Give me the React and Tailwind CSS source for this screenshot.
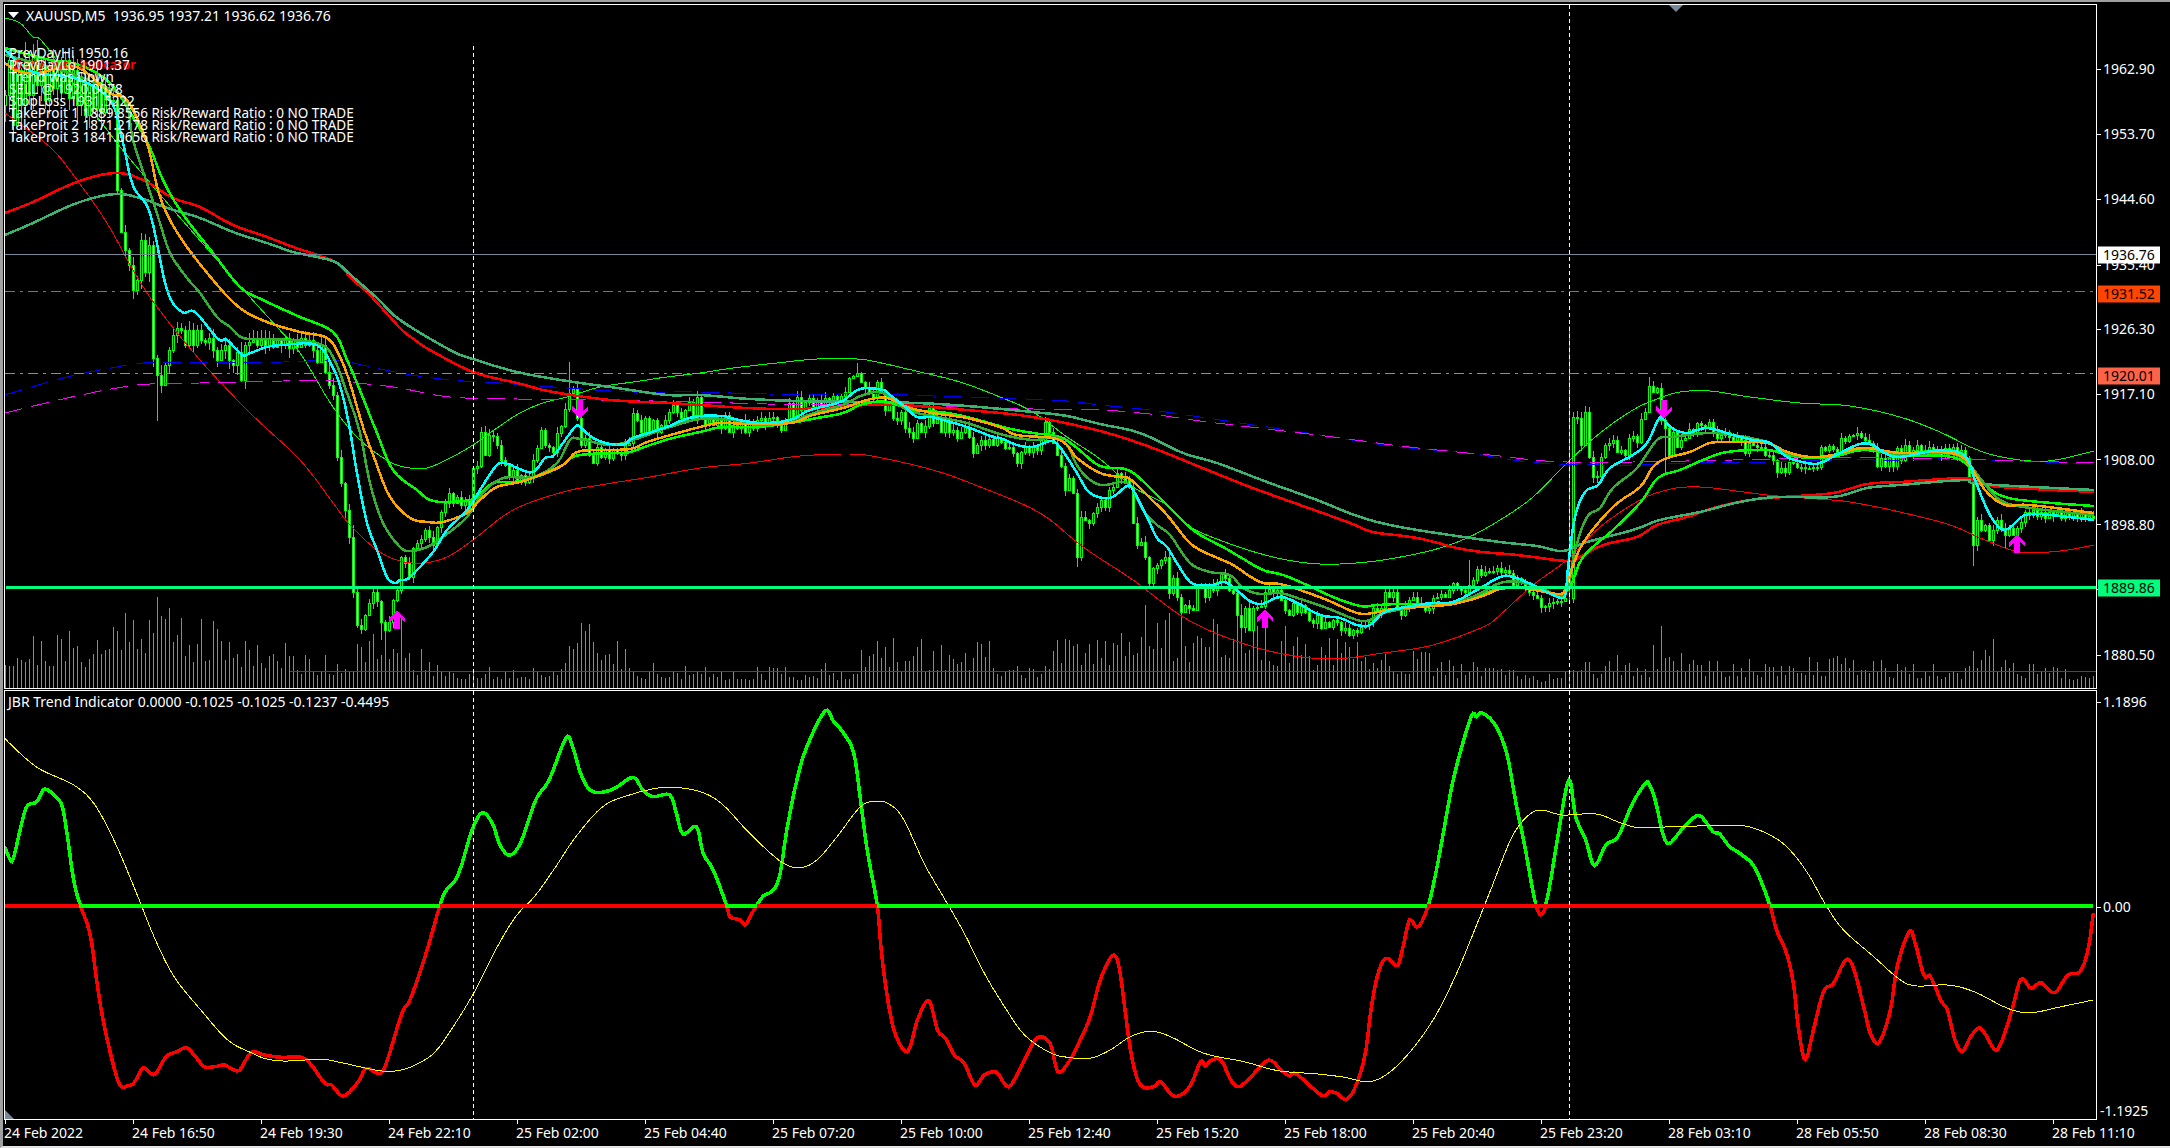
import React from "react";

const k3 = (a, x0, y0, sx = 3) => a.map(([x, y]) => [x0 + x / sx, y0 + y / 3]);
const toPts = (a) => a.map(([x, y]) => `${x.toFixed(1)},${y.toFixed(1)}`).join(" ");
const smooth = (a) => {
  const out = [];
  const n = a.length;
  for (let i = 0; i < n - 1; i++) {
    const p0 = a[Math.max(i - 1, 0)];
    const p1 = a[i];
    const p2 = a[i + 1];
    const p3 = a[Math.min(i + 2, n - 1)];
    for (let s = 0; s < 5; s++) {
      const t = s / 5;
      const f = (j) =>
        0.5 * (2 * p1[j] + (p2[j] - p0[j]) * t + (2 * p0[j] - 5 * p1[j] + 4 * p2[j] - p3[j]) * t * t + (3 * p1[j] - p0[j] - 3 * p2[j] + p3[j]) * t * t * t);
      out.push([f(0), f(1)]);
    }
  }
  out.push(a[n - 1]);
  return out;
};

const CYAN = [[5,50],[33,72],[75,78],[110,100],[123,143],[133,186],[150,213],[167,290],[182,312],[195,312],[218,339],[227,340],[242,355],[248,354],[267,347],[283,345],[317,345],[333,368],[342,393],[350,430],[357,473],[367,523],[377,550],[387,577],[395,583],[400,580],[410,577],[433,552],[447,530],[467,510],[480,490],[497,465],[508,464],[517,468],[533,472],[545,458],[553,456],[563,443],[575,427],[580,427],[593,438],[610,444],[625,444],[633,438],[667,427],[683,420],[700,416],[723,416],[730,418],[760,423],[790,420],[810,410],[840,402],[860,389],[883,390],[890,395],[903,405],[917,417],[930,417],[943,420],[967,427],[993,437],[1000,438],[1017,445],[1033,447],[1050,441],[1058,445],[1067,457],[1077,473],[1090,493],[1110,498],[1127,486],[1133,490],[1147,517],[1157,538],[1167,547],[1180,568],[1193,584],[1213,585],[1225,582],[1240,593],[1250,601],[1262,604],[1280,597],[1297,603],[1320,615],[1340,618],[1357,625],[1370,625],[1383,613],[1400,608],[1433,603],[1453,602],[1477,590],[1500,577],[1513,577],[1533,585],[1553,595],[1565,596],[1568,567],[1575,517],[1585,492],[1598,485],[1610,468],[1633,455],[1647,443],[1658,420],[1663,419],[1672,428],[1687,433],[1707,428],[1733,435],[1753,440],[1770,443],[1787,457],[1807,463],[1820,463],[1840,453],[1860,444],[1873,445],[1883,452],[1900,457],[1940,450],[1965,456],[1975,480],[1990,515],[2005,530],[2025,515],[2050,515],[2094,520]];
const ORANGE = [[5,63],[20,72],[43,72],[77,67],[110,93],[127,100],[147,143],[160,197],[180,237],[213,280],[240,308],[267,322],[300,332],[327,338],[340,357],[350,383],[363,427],[375,460],[390,497],[410,518],[428,522],[443,522],[467,513],[480,500],[497,487],[520,482],[540,475],[563,465],[577,452],[600,450],[630,449],[647,442],[667,436],[700,427],[720,423],[750,424],[790,423],[813,415],[843,408],[867,400],[887,398],[907,407],[933,413],[967,418],[1000,427],[1017,435],[1053,438],[1067,445],[1077,458],[1100,473],[1120,477],[1130,479],[1150,498],[1167,515],[1187,540],[1200,550],[1220,559],[1233,565],[1260,582],[1280,584],[1300,590],[1327,600],[1357,613],[1373,613],[1393,609],[1433,606],[1453,604],[1480,597],[1503,588],[1523,588],[1550,593],[1563,593],[1568,580],[1583,543],[1613,507],[1640,487],[1653,467],[1667,458],[1690,452],[1710,443],[1733,442],[1767,443],[1787,452],[1810,457],[1833,455],[1863,448],[1900,453],[1940,452],[1965,459],[1985,490],[2005,505],[2030,505],[2094,513]];
const MID = [[5,55],[60,70],[100,85],[125,100],[133,140],[147,183],[160,223],[170,253],[187,278],[200,293],[217,317],[230,327],[243,338],[267,339],[317,343],[333,357],[347,393],[360,433],[370,483],[383,523],[400,547],[410,551],[427,547],[443,537],[467,517],[483,493],[503,478],[533,477],[557,463],[570,440],[580,439],[610,445],[633,440],[667,428],[700,419],[733,420],[760,425],[790,421],[817,412],[843,405],[863,395],[883,393],[907,410],[933,416],[967,423],[1000,434],[1033,440],[1053,437],[1067,445],[1080,470],[1100,485],[1127,483],[1143,510],[1157,525],[1170,535],[1190,563],[1210,572],[1230,575],[1243,588],[1260,594],[1280,593],[1300,599],[1327,608],[1357,620],[1370,620],[1387,612],[1433,605],[1453,603],[1477,595],[1500,583],[1520,582],[1540,588],[1565,594],[1575,550],[1587,517],[1600,508],[1613,488],[1637,468],[1657,440],[1673,437],[1707,433],[1733,435],[1767,442],[1787,453],[1810,457],[1833,455],[1863,448],[1900,454],[1945,453],[1965,460],[1980,478],[2000,500],[2030,508],[2094,515]];
const LIME = [[5,48],[50,60],[80,65],[110,83],[133,117],[150,148],[163,180],[182,213],[213,253],[240,287],[263,300],[300,317],[333,332],[347,360],[357,383],[377,433],[393,470],[417,490],[433,501],[463,501],[477,497],[493,483],[513,482],[533,478],[560,467],[573,457],[590,454],[617,453],[630,452],[650,445],[673,438],[700,432],[723,427],[757,427],[790,423],[817,418],[843,413],[863,404],[887,402],[913,410],[940,412],[967,417],[1007,428],[1033,433],[1060,437],[1077,448],[1100,466],[1130,471],[1160,498],[1180,518],[1197,533],[1223,547],[1240,557],[1263,570],[1283,575],[1307,585],[1333,597],[1360,606],[1377,605],[1400,604],[1433,605],[1453,603],[1473,597],[1500,589],[1530,587],[1565,593],[1583,557],[1613,530],[1640,503],[1658,478],[1680,470],[1703,460],[1727,452],[1767,450],[1787,455],[1810,458],[1833,457],[1863,450],[1900,455],[1945,456],[1965,463],[1985,485],[2005,497],[2040,502],[2094,506]];
const RED = [[5,213],[33,202],[77,182],[115,173],[143,180],[173,198],[200,207],[233,225],[267,237],[293,247],[317,255],[337,263],[353,280],[370,295],[400,328],[415,340],[430,350],[473,372],[517,383],[553,392],[610,400],[667,403],[700,405],[747,408],[800,409],[867,405],[900,405],[967,410],[1033,417],[1100,431],[1150,447],[1200,467],[1250,487],[1300,505],[1350,523],[1373,532],[1417,538],[1467,550],[1517,555],[1567,561],[1580,557],[1603,545],[1637,537],[1657,525],[1687,517],[1717,507],[1750,500],[1783,497],[1833,493],[1867,484],[1900,482],[1965,478],[1975,482],[2000,487],[2094,492]];
const TEAL = [[5,235],[33,223],[77,203],[115,194],[143,199],[167,208],[200,218],[233,232],[267,243],[293,252],[317,257],[337,263],[353,277],[377,298],[400,320],[450,350],[473,359],[517,372],[567,381],[617,388],[667,395],[700,395],[750,399],[800,401],[867,402],[917,403],[967,406],[1033,412],[1067,416],[1100,424],[1140,433],[1183,453],[1217,463],[1267,482],[1317,500],[1360,517],[1400,527],[1450,535],[1500,542],[1537,546],[1563,551],[1587,542],[1633,530],[1660,520],[1700,512],[1740,502],[1777,497],[1833,497],[1867,488],[1900,485],[1965,480],[1980,484],[2094,490]];
const THINLIME = [[5,18],[20,23],[33,37],[47,47],[117,143],[217,260],[277,327],[300,353],[333,407],[360,440],[390,462],[410,468],[427,468],[450,458],[473,445],[497,428],[520,413],[543,403],[567,397],[600,387],[633,382],[667,377],[700,373],[733,368],[777,363],[817,359],[857,359],[877,362],[920,372],[960,382],[1000,397],[1033,412],[1067,437],[1100,459],[1133,487],[1167,505],[1190,527],[1233,545],[1273,557],[1307,563],[1340,564],[1383,560],[1433,550],[1467,538],[1500,520],[1533,497],[1567,463],[1600,433],[1633,410],[1657,399],[1680,392],[1710,391],[1750,397],[1800,403],[1850,406],[1900,417],[1940,432],[1975,449],[2007,458],[2048,461],[2094,451]];
const THINRED = [[5,113],[50,147],[77,180],[107,223],[133,270],[157,307],[200,360],[250,413],[300,460],[333,503],[350,525],[377,550],[400,561],[423,563],[447,557],[473,540],[513,510],[563,492],[600,485],[650,477],[700,468],[750,463],[800,456],[850,454],[877,457],[933,470],[983,488],[1040,513],[1083,547],[1133,580],[1183,617],[1233,640],[1283,654],[1333,659],[1383,653],[1433,645],[1483,627],[1500,615],[1533,585],[1567,560],[1600,527],[1640,500],[1667,490],[1687,487],[1713,488],[1767,495],[1817,499],[1850,502],[1900,512],[1950,525],[1985,540],[2020,552],[2060,551],[2094,545]];
const BLUE = [[5,395],[67,377],[117,367],[143,363],[200,362],[283,362],[333,360],[353,363],[400,373],[450,380],[500,383],[567,388],[633,392],[700,392],[767,394],[883,394],[933,396],[1000,398],[1067,401],[1100,405],[1150,410],[1200,417],[1267,427],[1333,437],[1400,447],[1467,453],[1520,461],[1557,464],[1600,465],[1633,465],[1700,463],[1767,462],[1833,460],[1900,460],[1950,459],[2094,464]];
const MAGENTA = [[5,413],[67,398],[117,388],[150,384],[200,383],[283,381],[333,381],[367,384],[400,388],[450,397],[517,399],[600,400],[700,402],[767,404],[867,405],[967,407],[1033,409],[1100,410],[1150,414],[1200,421],[1267,429],[1333,437],[1400,446],[1467,453],[1500,456],[1533,460],[1567,462],[1633,462],[1733,460],[1833,458],[1900,458],[1950,459],[2094,463]];

const SEGS = [
  [5, [95,60,125,70,105,60,95,55,85,65,100,65,88,60,92,60,98,70,105,78,115,85,108,82,112,88,100,100,190,232,250,265,290,280,240,272,245,358,375,385,365,350,335,328,330,345,330,345,330,340,342,338,350,360,350,345,360,365,352,380,345,342,340,345,340,345,338,347,340,345,338,348,340,347,338,345,340,350,362,345,372,385,395]],
  [337, [457,483,510,537,592,625,629,615,603,592,601,622,630,622,600,590,557,563,577,548,543,539,530,537,545,527,512,503,493,503,497,505,500,508,468,466,432,455,435,436,445,460,465,477,470,480,475,482,478,460,448,430,445,447,452,433,426,409,393,389,418,445,438,455,463,447,457,450,458,450,453,455,445,443,413,420,432,418,432,420,432,425,420,412,405,412,418,410,402,418,397]],
  [701, [417,425,418,425,420,428,415,432,425,428,420,432,422,428,420,418,425,418,417,425,430,420,403,418,397,410,402,398,408,400,405,398,402,396,400,396,392,378,376,373,382,387,393,398,382,392,410,405,418,420,412,428,432,438,423,432,426,408,423,418,432,420,432,430,438,432,427,437,453,445,440,445,439,445,438,442,448,447,453,463,452,447,452,447,450,440,422,432,443,455,466,490,478,493]],
  [1077, [557,517,520,523,513,507,500,507,490,487,473,478,480,487,523,545,542,557,583,568,565,560,557,593,578,597,612,605,608,610,587,585,597,585,590,582,573,578,590,593,615,627,608,630,608,607,606,592,589,593,590,600,610,615,603,612,605,612,620,623,615,628,622,627,620,622,630,628,635,630,632,627,625,622,608,612,608,592,597,592,607]],
  [1401, [615,607,600,597,603,605,610,608,598,597,594,597,590,583,587,590,592,585,580,569,575,572,571,571,568,572,570,573,585,578,582,586,592,595,598,607,606,603,602,601,601,598,598,417,418,445,412,457,477,476,457,445,443,440,452,450,455,438,436,442,419,412,386,392,388,420,428,455,432,447,440,438,429,432,423,425,428,422,432,438,435,432,437,440,437,440,453,443,445,447,447,455,455,460,472,468,472,462,463,467,467,468,468,467,467,447,450,446,449,452,438,441,436,435,433,437,440,443,448,466,458,466,458,466,448]],
  [1901, [460,445,455,450,445,455,450,447,452,450,455,448,453,447,455,450,458,480,545,520,530,525,540,530,520,528,535,528,535,528,522,512,515,510,516,512,518,512,516,510,518,512,517,513,518,514,518,516,518]],
];

function rng(seed) {
  let s = seed;
  return () => {
    s = (s * 1664525 + 1013904223) >>> 0;
    return s / 4294967296;
  };
}

const closes = {};
SEGS.forEach(([start, arr]) => arr.forEach((v, i) => { closes[start + i * 4] = v; }));

const WICK = { 157: [null, 421], 353: [525, null], 381: [null, 640], 569: [362, null], 857: [363, null], 1077: [null, 567], 1109: [null, 512], 1649: [377, null], 1665: [null, 475], 1821: [null, 470], 1973: [null, 566], 2005: [null, 548], 1469: [560, null] };

const candles = (() => {
  const r = rng(7);
  const out = [];
  Object.keys(closes).map(Number).sort((a, b) => a - b).forEach((x) => {
    const c = closes[x];
    const o = closes[x - 4] ?? c + 10;
    const big = x < 115 ? 18 : x < 360 ? 10 : 6;
    let top = Math.min(o, c) - 1 - Math.floor(r() * big);
    let bot = Math.max(o, c) + 1 + Math.floor(r() * big);
    const w = WICK[x];
    if (w && w[0]) top = w[0];
    if (w && w[1]) bot = w[1];
    out.push({ x, o, c, top, bot });
  });
  return out;
})();

const VOL_ENV = [[5,44],[110,50],[117,84],[165,84],[200,56],[250,48],[300,32],[340,28],[375,48],[400,58],[415,32],[450,20],[520,18],[560,24],[565,58],[620,42],[640,22],[700,17],[850,20],[860,38],[990,40],[1000,20],[1040,22],[1045,34],[1100,50],[1133,68],[1200,60],[1230,72],[1250,78],[1270,50],[1340,38],[1400,33],[1450,23],[1500,23],[1520,13],[1560,15],[1565,24],[1650,26],[1660,52],[1680,37],[1700,26],[1870,26],[1877,35],[1890,22],[1965,20],[1970,40],[2005,38],[2020,22],[2094,18]];
const envAt = (x) => {
  for (let i = 1; i < VOL_ENV.length; i++) {
    if (x <= VOL_ENV[i][0]) {
      const [a, b] = VOL_ENV[i - 1];
      const [c, d] = VOL_ENV[i];
      return b + ((d - b) * (x - a)) / (c - a);
    }
  }
  return 18;
};
const volumes = (() => {
  const r = rng(21);
  const out = [];
  for (let x = 5; x < 2096; x += 4) {
    const v = r();
    out.push({ x, h: Math.round(envAt(x) * (0.42 + 0.58 * v * v + 0.3 * v)) });
  }
  return out;
})();

const IND_A = k3([[7,470],[15,508],[20,505],[30,420],[40,350],[55,335],[67,297],[85,325],[93,350],[100,430],[110,570],[120,646],[130,700],[137,760],[145,880],[155,1000],[170,1130],[180,1188],[190,1188],[200,1178],[213,1135],[222,1145],[232,1152],[248,1100],[262,1087],[278,1073],[290,1095],[305,1130],[320,1130],[335,1125],[345,1135],[358,1140],[375,1087],[395,1095],[420,1102],[450,1102],[465,1125],[485,1180],[495,1185],[513,1218],[535,1175],[547,1135],[568,1150],[580,1100],[600,970],[612,930],[630,830],[645,730],[657,646],[665,605],[680,570],[690,520],[705,420],[720,368],[735,400],[748,470],[762,495],[778,455],[800,330],[820,270],[845,145],[855,170],[868,255],[885,305],[915,298],[945,262],[960,300],[975,320],[1000,315],[1010,370],[1020,432],[1040,410],[1050,490],[1065,540],[1085,646],[1090,680],[1105,690],[1113,705],[1120,680],[1130,646],[1140,618],[1155,600],[1165,550],[1175,420],[1190,270],[1205,170],[1232,63],[1245,95],[1260,130],[1275,190],[1285,330],[1295,480],[1310,646],[1315,760],[1322,880],[1335,1020],[1355,1085],[1370,990],[1387,932],[1400,1020],[1412,1045],[1425,1095],[1440,1120],[1456,1185],[1470,1155],[1488,1147],[1506,1190],[1525,1130],[1548,1045]], 0, 690, 1.4933);
const IND_B = k3([[0,1060],[12,1145],[30,1110],[45,1050],[60,980],[75,870],[93,797],[103,830],[112,960],[122,1100],[135,1185],[155,1190],[165,1175],[182,1215],[195,1215],[210,1185],[225,1115],[232,1128],[240,1112],[255,1110],[270,1170],[280,1190],[290,1180],[305,1150],[327,1110],[345,1140],[358,1158],[368,1152],[405,1215],[418,1205],[430,1212],[442,1228],[455,1195],[470,1100],[480,950],[490,850],[502,805],[518,827],[525,790],[535,700],[540,692],[550,710],[565,646],[580,510],[600,290],[615,170],[630,75],[637,80],[645,68],[665,105],[682,190],[695,330],[710,480],[725,640],[735,672],[745,600],[760,420],[775,270],[785,380],[800,450],[813,527],[830,465],[848,440],[870,340],[888,283],[895,283],[905,340],[915,430],[925,460],[945,415],[965,378],[975,385],[990,425],[1000,432],[1015,470],[1030,490],[1050,525],[1065,590],[1075,646],[1085,720],[1100,790],[1110,880],[1118,1020],[1128,1108],[1140,1020],[1155,905],[1170,880],[1188,810],[1200,835],[1215,950],[1225,1030],[1238,1058],[1255,960],[1265,830],[1283,725],[1292,760],[1305,855],[1315,860],[1330,930],[1340,960],[1350,1040],[1362,1085],[1375,1040],[1390,1015],[1410,1077],[1420,1060],[1435,970],[1450,868],[1465,895],[1480,878],[1500,908],[1520,855],[1538,845],[1550,780],[1558,670]], 1050, 690, 1.4933);
const IND = [...IND_A, ...IND_B];
const SIG = [
  ...k3([[7,145],[30,190],[60,238],[110,285],[140,340],[170,450],[200,590],[230,740],[260,860],[300,960],[340,1050],[375,1088],[400,1108],[430,1113],[480,1108],[510,1118],[560,1140],[590,1143],[620,1125],[650,1085],[680,1000],[710,900],[740,780],[770,680],[800,615],[830,530],[860,440],[900,350],[940,315],[980,295],[1010,292],[1050,308],[1080,345],[1110,410],[1140,470],[1170,520],[1195,533],[1220,510],[1250,440],[1285,350],[1310,333],[1330,345],[1350,390],[1380,520],[1410,625],[1440,730],[1470,850],[1500,950],[1530,1035]], 0, 690, 1.4933),
  ...k3([[0,1088],[30,1103],[60,1105],[90,1080],[120,1040],[150,1024],[180,1040],[230,1090],[290,1115],[340,1142],[400,1152],[440,1162],[475,1175],[505,1150],[540,1080],[575,980],[605,860],[630,740],[660,590],[690,440],[715,375],[735,360],[765,375],[815,372],[850,397],[880,413],[930,410],[990,407],[1035,407],[1070,430],[1100,470],[1130,545],[1160,650],[1185,720],[1230,800],[1270,870],[1295,888],[1340,885],[1380,905],[1430,955],[1465,968],[1510,950],[1558,930]], 1050, 690, 1.4933),
];

const ZERO = 906;
const RED_ZERO = [[5, 79], [440, 725], [757, 877], [1427, 1770]];
const GREEN_ZERO = [[79, 440], [725, 757], [877, 1427], [1770, 2093]];

const PRICES = [[69,"1962.90"],[134,"1953.70"],[199,"1944.60"],[265,"1935.40"],[329,"1926.30"],[394,"1917.10"],[459.5,"1908.00"],[524.5,"1898.80"],[589,"1889.70"],[655,"1880.50"]];
const BADGES = [
  { y: 254.5, t: "1936.76", c: "bg-white" },
  { y: 293.5, t: "1931.52", c: "bg-[#ff4500]" },
  { y: 375.5, t: "1920.01", c: "bg-[#ff6347]" },
  { y: 587.5, t: "1889.86", c: "bg-[#00ff7f]" },
];
const TIMES = ["24 Feb 2022","24 Feb 16:50","24 Feb 19:30","24 Feb 22:10","25 Feb 02:00","25 Feb 04:40","25 Feb 07:20","25 Feb 10:00","25 Feb 12:40","25 Feb 15:20","25 Feb 18:00","25 Feb 20:40","25 Feb 23:20","28 Feb 03:10","28 Feb 05:50","28 Feb 08:30","28 Feb 11:10"];
const INFO = ["PrevDayHi 1950.16","PrevDayLo 1901.37","Trend was Down","SELL @ 1920.0078","StopLoss 1931.5222","TakeProit 1 1889.8556 Risk/Reward Ratio : 0 NO TRADE","TakeProit 2 1871.2178 Risk/Reward Ratio : 0 NO TRADE","TakeProit 3 1841.0656 Risk/Reward Ratio : 0 NO TRADE"];

const Line = ({ pts, color, w = 3, dash }) => (
  <polyline points={toPts(smooth(pts))} fill="none" stroke={color} strokeWidth={w} strokeDasharray={dash} shapeRendering="crispEdges" />
);
const ArrowUp = ({ x, y }) => (
  <polygon points={`${x},${y} ${x + 8},${y + 9} ${x + 8},${y + 13} ${x + 3},${y + 8} ${x + 3},${y + 19} ${x - 3},${y + 19} ${x - 3},${y + 8} ${x - 8},${y + 13} ${x - 8},${y + 9}`} fill="#ff00ff" shapeRendering="crispEdges" />
);
const ArrowDown = ({ x, y }) => (
  <polygon points={`${x},${y} ${x + 8},${y - 9} ${x + 8},${y - 13} ${x + 3},${y - 8} ${x + 3},${y - 19} ${x - 3},${y - 19} ${x - 3},${y - 8} ${x - 8},${y - 13} ${x - 8},${y - 9}`} fill="#ff00ff" shapeRendering="crispEdges" />
);

function MainChart() {
  return (
    <svg width="2091" height="683" viewBox="5 5 2091 683" className="block">
      <g shapeRendering="crispEdges">
        {volumes.map((v) => (
          <line key={v.x} x1={v.x + 0.5} x2={v.x + 0.5} y1={688} y2={688 - v.h} stroke="#3fbf3f" strokeWidth="1" />
        ))}
        <line x1="290" x2="2096" y1="671" y2="671" stroke="#ff0000" strokeWidth="1" />
        {candles.map((c) => (
          <line key={c.x} x1={c.x + 0.5} x2={c.x + 0.5} y1={c.top} y2={c.bot} stroke="#00ff00" strokeWidth="1" />
        ))}
        <line x1="1569.5" x2="1569.5" y1="326" y2="598" stroke="#2fc42f" strokeWidth="1" />
        {candles.filter((c) => c.x !== 1569).map((c) => (
          <rect key={c.x} x={c.x - 0.5} width="2" y={Math.round(Math.min(c.o, c.c)) + 0.5} height={Math.max(1, Math.round(Math.abs(c.o - c.c)))} fill={c.c > c.o ? "#ffffff" : "#000000"} stroke="#00ff00" strokeWidth="1" />
        ))}
      </g>
      <Line pts={THINLIME} color="#00ff00" w={1} />
      <Line pts={THINRED} color="#ff0000" w={1} />
      <Line pts={BLUE} color="#0000ff" w={1} dash="18 9" />
      <Line pts={MAGENTA} color="#ff00ff" w={1} dash="18 9" />
      <Line pts={RED} color="#ff0000" w={2.5} />
      <Line pts={TEAL} color="#3cb371" w={2.5} />
      <Line pts={LIME} color="#00ff00" w={2.5} />
      <Line pts={MID} color="#35b035" w={2.5} />
      <Line pts={ORANGE} color="#ffa500" w={2.5} />
      <Line pts={CYAN} color="#00ffff" w={2.5} />
      <g shapeRendering="crispEdges">
        <line x1="5" x2="2096" y1="254.5" y2="254.5" stroke="#778899" strokeWidth="1" />
        <line x1="5" x2="2096" y1="291.5" y2="291.5" stroke="#ff4500" strokeWidth="1" strokeDasharray="10 5 3 5" />
        <line x1="5" x2="2096" y1="373.5" y2="373.5" stroke="#ff6347" strokeWidth="1" strokeDasharray="10 5 3 5" />
        <rect x="6" y="586" width="2090" height="2.5" fill="#00ff7f" />
        <line x1="473.5" x2="473.5" y1="46" y2="688" stroke="#ffffff" strokeWidth="1" strokeDasharray="4 3" />
        <line x1="1569.5" x2="1569.5" y1="5" y2="688" stroke="#ffffff" strokeWidth="1" strokeDasharray="4 3" />
      </g>
      <ArrowUp x={397} y={610} />
      <ArrowUp x={1265} y={609} />
      <ArrowUp x={2017} y={534} />
      <ArrowDown x={580} y={419} />
      <ArrowDown x={1664} y={419} />
      <polygon points="1669,5 1683,5 1676,12" fill="#778899" />
      <polygon points="8,12 19,12 13.5,18" fill="#ffffff" />
    </svg>
  );
}

function IndicatorChart() {
  return (
    <svg width="2091" height="428" viewBox="5 691 2091 428" className="block">
      <defs>
        <clipPath id="above"><rect x="0" y="680" width="2100" height="226" /></clipPath>
        <clipPath id="below"><rect x="0" y="906" width="2100" height="230" /></clipPath>
      </defs>
      <g clipPath="url(#above)"><Line pts={IND} color="#00ff00" w={3.5} /></g>
      <g clipPath="url(#below)"><Line pts={IND} color="#ff0000" w={3.5} /></g>
      <Line pts={SIG} color="#ffff00" w={1} />
      <g shapeRendering="crispEdges">
        {GREEN_ZERO.map(([a, b]) => <line key={a} x1={a} x2={b} y1={ZERO} y2={ZERO} stroke="#00ff00" strokeWidth="3.5" />)}
        {RED_ZERO.map(([a, b]) => <line key={a} x1={a} x2={b} y1={ZERO} y2={ZERO} stroke="#ff0000" strokeWidth="3.5" />)}
        <line x1="473.5" x2="473.5" y1="691" y2="1119" stroke="#ffffff" strokeWidth="1" strokeDasharray="4 3" />
        <line x1="1569.5" x2="1569.5" y1="691" y2="1119" stroke="#ffffff" strokeWidth="1" strokeDasharray="4 3" />
      </g>
      <polygon points="5,1110 14,1119 5,1119" fill="#778899" />
    </svg>
  );
}

function AxisText({ y, children }) {
  return (
    <div className="absolute left-0 flex items-center h-[18px] -translate-y-1/2" style={{ top: y }}>
      <span className="w-[4px] h-px bg-white" />
      <span className="pl-[2px] text-white">{children}</span>
    </div>
  );
}

export default function App() {
  return (
    <div className="w-[2170px] h-[1148px] bg-black border-t-2 border-l-[3px] border-b-2 border-t-[#a0a0a0] border-l-[#a0a0a0] border-b-[#e4e4e4] pt-[2px] pl-px flex flex-col overflow-hidden font-['Noto_Sans',sans-serif] text-[14px] leading-[18px]">
      <div className="flex h-[685px] shrink-0">
        <div className="relative w-[2093px] border border-white overflow-hidden">
          <MainChart />
          <div className="absolute left-[21px] top-[2px] text-white whitespace-pre">XAUUSD,M5  1936.95 1937.21 1936.62 1936.76</div>
          <div className="absolute left-[8px] top-[54px] text-[#ff0000] font-bold text-[12.5px] leading-[12px]">Daily auto indicator</div>
          <div className="absolute left-[4px] top-[42px] text-white text-[13.5px] leading-[12px] whitespace-pre">
            {INFO.map((t) => <div key={t}>{t}</div>)}
          </div>
        </div>
        <div className="relative flex-1">
          {PRICES.map(([y, t]) => <AxisText key={t} y={y - 4}>{t}</AxisText>)}
          {BADGES.map((b) => (
            <div key={b.t} className={`absolute left-px w-[62px] h-[17px] pl-[5px] flex items-center text-black -translate-y-1/2 ${b.c}`} style={{ top: b.y - 4 }}>{b.t}</div>
          ))}
        </div>
      </div>
      <div className="h-px shrink-0" />
      <div className="flex h-[430px] shrink-0">
        <div className="relative w-[2093px] border border-white overflow-hidden">
          <IndicatorChart />
          <div className="absolute left-[3px] top-[2px] text-white whitespace-pre">JBR Trend Indicator 0.0000 -0.1025 -0.1025 -0.1237 -0.4495</div>
        </div>
        <div className="relative flex-1">
          <AxisText y={12}>1.1896</AxisText>
          <AxisText y={217}>0.00</AxisText>
          <div className="absolute left-[3px] top-[412px] text-white">-1.1925</div>
        </div>
      </div>
      <div className="flex flex-1 pl-px text-white">
        {TIMES.map((t) => (
          <div key={t} className="w-[128px] shrink-0 flex flex-col">
            <span className="w-px h-[4px] bg-white shrink-0" />
            <span className="whitespace-pre -ml-px">{t}</span>
          </div>
        ))}
      </div>
    </div>
  );
}
